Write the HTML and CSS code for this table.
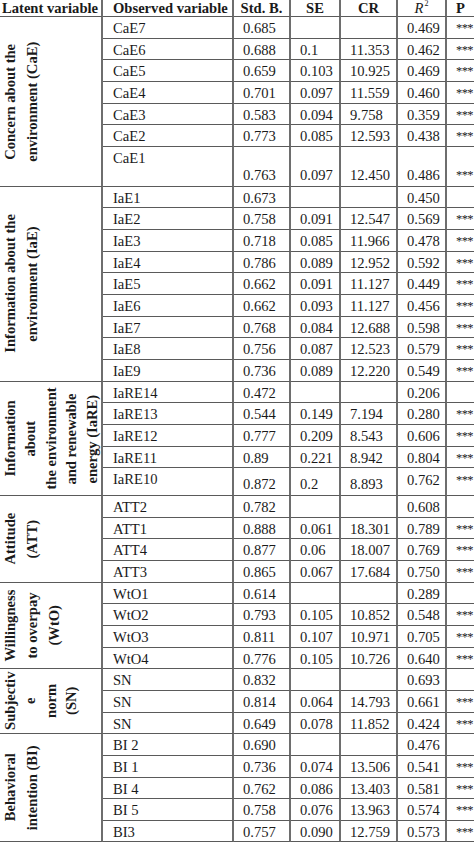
FILE: index.html
```html
<!DOCTYPE html>
<html>
<head>
<meta charset="utf-8">
<link rel="stylesheet" href="styles.css">
</head>
<body>
<div class="tbl">
  <div class="c hd hl">Latent variable</div>
  <div class="c hd ho">Observed variable</div>
  <div class="c hd hc">Std. B.</div>
  <div class="c hd hc">SE</div>
  <div class="c hd hc">CR</div>
  <div class="c hd hc"><i>R</i><sup>2</sup></div>
  <div class="c hd hc last">P</div>

  <div class="c lat s7"><div class="rot">Concern about the<br>environment (CaE)</div></div>
  <div class="c ob">CaE7</div><div class="c v">0.685</div><div class="c v"></div><div class="c v"></div><div class="c v">0.469</div><div class="c v p last">***</div>
  <div class="c ob">CaE6</div><div class="c v">0.688</div><div class="c v">0.1</div><div class="c v">11.353</div><div class="c v">0.462</div><div class="c v p last">***</div>
  <div class="c ob">CaE5</div><div class="c v">0.659</div><div class="c v">0.103</div><div class="c v">10.925</div><div class="c v">0.469</div><div class="c v p last">***</div>
  <div class="c ob">CaE4</div><div class="c v">0.701</div><div class="c v">0.097</div><div class="c v">11.559</div><div class="c v">0.460</div><div class="c v p last">***</div>
  <div class="c ob">CaE3</div><div class="c v">0.583</div><div class="c v">0.094</div><div class="c v">9.758</div><div class="c v">0.359</div><div class="c v p last">***</div>
  <div class="c ob">CaE2</div><div class="c v">0.773</div><div class="c v">0.085</div><div class="c v">12.593</div><div class="c v">0.438</div><div class="c v p last">***</div>
  <div class="c ob">CaE1</div><div class="c v bt">0.763</div><div class="c v bt">0.097</div><div class="c v bt">12.450</div><div class="c v bt">0.486</div><div class="c v p bt last">***</div>

  <div class="c lat s9"><div class="rot">Information about the<br>environment (IaE)</div></div>
  <div class="c ob">IaE1</div><div class="c v">0.673</div><div class="c v"></div><div class="c v"></div><div class="c v">0.450</div><div class="c v p last"></div>
  <div class="c ob">IaE2</div><div class="c v">0.758</div><div class="c v">0.091</div><div class="c v">12.547</div><div class="c v">0.569</div><div class="c v p last">***</div>
  <div class="c ob">IaE3</div><div class="c v">0.718</div><div class="c v">0.085</div><div class="c v">11.966</div><div class="c v">0.478</div><div class="c v p last">***</div>
  <div class="c ob">IaE4</div><div class="c v">0.786</div><div class="c v">0.089</div><div class="c v">12.952</div><div class="c v">0.592</div><div class="c v p last">***</div>
  <div class="c ob">IaE5</div><div class="c v">0.662</div><div class="c v">0.091</div><div class="c v">11.127</div><div class="c v">0.449</div><div class="c v p last">***</div>
  <div class="c ob">IaE6</div><div class="c v">0.662</div><div class="c v">0.093</div><div class="c v">11.127</div><div class="c v">0.456</div><div class="c v p last">***</div>
  <div class="c ob">IaE7</div><div class="c v">0.768</div><div class="c v">0.084</div><div class="c v">12.688</div><div class="c v">0.598</div><div class="c v p last">***</div>
  <div class="c ob">IaE8</div><div class="c v">0.756</div><div class="c v">0.087</div><div class="c v">12.523</div><div class="c v">0.579</div><div class="c v p last">***</div>
  <div class="c ob">IaE9</div><div class="c v">0.736</div><div class="c v">0.089</div><div class="c v">12.220</div><div class="c v">0.549</div><div class="c v p last">***</div>

  <div class="c lat s5"><div class="rot tight">Information<br>about<br>the environment<br>and renewable<br>energy (IaRE)</div></div>
  <div class="c ob">IaRE14</div><div class="c v">0.472</div><div class="c v"></div><div class="c v"></div><div class="c v">0.206</div><div class="c v p last"></div>
  <div class="c ob">IaRE13</div><div class="c v">0.544</div><div class="c v">0.149</div><div class="c v">7.194</div><div class="c v">0.280</div><div class="c v p last">***</div>
  <div class="c ob">IaRE12</div><div class="c v">0.777</div><div class="c v">0.209</div><div class="c v">8.543</div><div class="c v">0.606</div><div class="c v p last">***</div>
  <div class="c ob">IaRE11</div><div class="c v">0.89</div><div class="c v">0.221</div><div class="c v">8.942</div><div class="c v">0.804</div><div class="c v p last">***</div>
  <div class="c ob">IaRE10</div><div class="c v bt">0.872</div><div class="c v bt">0.2</div><div class="c v bt">8.893</div><div class="c v bt2">0.762</div><div class="c v p bt2 last">***</div>

  <div class="c lat s4"><div class="rot">Attitude<br>(ATT)</div></div>
  <div class="c ob">ATT2</div><div class="c v">0.782</div><div class="c v"></div><div class="c v"></div><div class="c v">0.608</div><div class="c v p last"></div>
  <div class="c ob">ATT1</div><div class="c v">0.888</div><div class="c v">0.061</div><div class="c v">18.301</div><div class="c v">0.789</div><div class="c v p last">***</div>
  <div class="c ob">ATT4</div><div class="c v">0.877</div><div class="c v">0.06</div><div class="c v">18.007</div><div class="c v">0.769</div><div class="c v p last">***</div>
  <div class="c ob">ATT3</div><div class="c v">0.865</div><div class="c v">0.067</div><div class="c v">17.684</div><div class="c v">0.750</div><div class="c v p last">***</div>

  <div class="c lat s4"><div class="rot">Willingness<br>to overpay<br>(WtO)</div></div>
  <div class="c ob">WtO1</div><div class="c v">0.614</div><div class="c v"></div><div class="c v"></div><div class="c v">0.289</div><div class="c v p last"></div>
  <div class="c ob">WtO2</div><div class="c v">0.793</div><div class="c v">0.105</div><div class="c v">10.852</div><div class="c v">0.548</div><div class="c v p last">***</div>
  <div class="c ob">WtO3</div><div class="c v">0.811</div><div class="c v">0.107</div><div class="c v">10.971</div><div class="c v">0.705</div><div class="c v p last">***</div>
  <div class="c ob">WtO4</div><div class="c v">0.776</div><div class="c v">0.105</div><div class="c v">10.726</div><div class="c v">0.640</div><div class="c v p last">***</div>

  <div class="c lat s3"><div class="rot tight">Subjectiv<br>e<br>norm<br>(SN)</div></div>
  <div class="c ob">SN</div><div class="c v">0.832</div><div class="c v"></div><div class="c v"></div><div class="c v">0.693</div><div class="c v p last"></div>
  <div class="c ob">SN</div><div class="c v">0.814</div><div class="c v">0.064</div><div class="c v">14.793</div><div class="c v">0.661</div><div class="c v p last">***</div>
  <div class="c ob">SN</div><div class="c v">0.649</div><div class="c v">0.078</div><div class="c v">11.852</div><div class="c v">0.424</div><div class="c v p last">***</div>

  <div class="c lat s5"><div class="rot">Behavioral<br>intention (BI)</div></div>
  <div class="c ob">BI 2</div><div class="c v">0.690</div><div class="c v"></div><div class="c v"></div><div class="c v">0.476</div><div class="c v p last"></div>
  <div class="c ob">BI 1</div><div class="c v">0.736</div><div class="c v">0.074</div><div class="c v">13.506</div><div class="c v">0.541</div><div class="c v p last">***</div>
  <div class="c ob">BI 4</div><div class="c v">0.762</div><div class="c v">0.086</div><div class="c v">13.403</div><div class="c v">0.581</div><div class="c v p last">***</div>
  <div class="c ob">BI 5</div><div class="c v">0.758</div><div class="c v">0.076</div><div class="c v">13.963</div><div class="c v">0.574</div><div class="c v p last">***</div>
  <div class="c ob">BI3</div><div class="c v">0.757</div><div class="c v">0.090</div><div class="c v">12.759</div><div class="c v">0.573</div><div class="c v p last">***</div>
</div>
</body>
</html>
```
FILE: styles.css
```css
html, body {
  margin: 0;
  padding: 0;
  background: #fff;
  overflow: hidden;
}
body {
  font-family: "Liberation Serif", "DejaVu Serif", serif;
  font-size: 14.6px;
  color: #1a1a1a;
}
.tbl {
  width: 474px;
  display: grid;
  grid-template-columns: 103px 131px 57px 50px 57px 49px 27px;
  grid-template-rows: 17px repeat(6, 21.65px) 40px repeat(13, 21.65px) 28px repeat(16, 21.65px);
}
.c {
  box-sizing: border-box;
  border-bottom: 1px solid #5a5a5a;
  border-right: 2px solid #6e6e6e;
  line-height: 21px;
  white-space: nowrap;
  overflow: hidden;
  display: flex;
  align-items: center;
}
.c.last {
  border-right: none;
}
.hd {
  font-weight: bold;
  line-height: 16px;
  align-items: flex-start;
  overflow: visible;
}
.hl {
  padding-left: 2px;
}
.ho {
  padding-left: 10px;
}
.hc {
  justify-content: center;
}
.hd sup {
  font-size: 8px;
  line-height: 8px;
  vertical-align: top;
  font-weight: normal;
  margin-left: 1px;
}
.hd i {
  font-weight: normal;
}
.ob {
  padding-left: 10px;
  align-items: flex-start;
  padding-top: 1px;
}
.v {
  padding-left: 9px;
  align-items: flex-start;
  padding-top: 1px;
}
.v.bt {
  align-items: flex-end;
  padding-bottom: 0;
}
.v.bt2 {
  align-items: flex-end;
  padding-bottom: 4px;
}
.p {
  font-size: 12.5px;
  padding-left: 9px;
  letter-spacing: -0.6px;
}
.lat {
  align-items: stretch;
  font-weight: bold;
}
.s3 { grid-row: span 3; }
.s4 { grid-row: span 4; }
.s5 { grid-row: span 5; }
.s7 { grid-row: span 7; }
.s9 { grid-row: span 9; }
.rot {
  writing-mode: vertical-rl;
  transform: rotate(180deg);
  text-align: center;
  line-height: 21.8px;
  white-space: nowrap;
}
.rot.tight {
  line-height: 20.4px;
}
```
